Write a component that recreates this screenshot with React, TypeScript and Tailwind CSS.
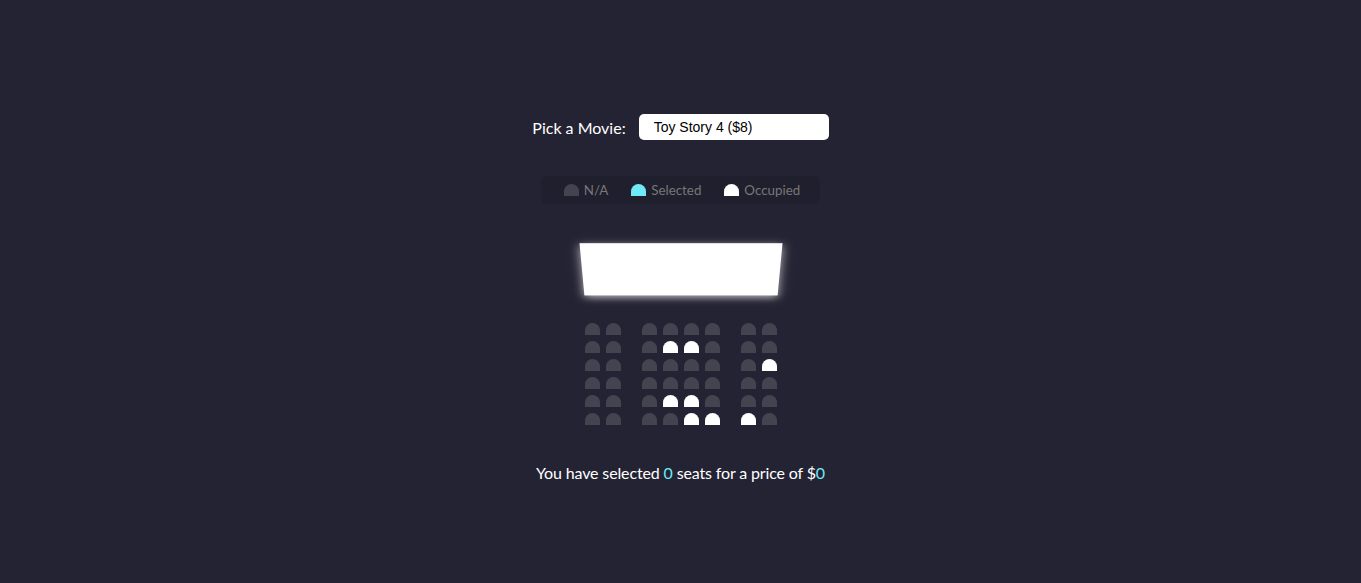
// Movie seat booking screen: movie picker, legend, screen and seat map.
const occupied: Record<number, number[]> = {
  1: [3, 4],
  2: [7],
  4: [3, 4],
  5: [4, 5, 6],
};

function Seat({ kind }: { kind: "na" | "selected" | "occupied" }) {
  const color =
    kind === "occupied" ? "bg-white" : kind === "selected" ? "bg-[#6feaf6]" : "bg-[#444451]";
  return <div className={`m-[3px] h-[12px] w-[15px] rounded-t-[10px] ${color}`} />;
}

export default function App() {
  return (
    <div className="flex min-h-[583px] flex-col items-center bg-[#242333] pt-[114px] font-['Lato',sans-serif] text-white">
      <div className="flex h-[26px] items-center">
        <label className="text-[16px] leading-[19px]">Pick a Movie:</label>
        <select
          defaultValue="10"
          className="ml-[13px] h-[26px] w-[190px] appearance-none rounded-[5px] border-0 bg-white px-[15px] py-[5px] font-['Liberation_Sans',Arial,sans-serif] text-[14px] leading-[16px] text-black outline-none"
        >
          <option value="10">Toy Story 4 ($8)</option>
          <option value="12">Avengers: Endgame ($10)</option>
          <option value="8">Joker ($12)</option>
        </select>
      </div>

      <ul className="mt-[36px] flex list-none justify-between rounded-[5px] bg-black/10 px-[10px] py-[5px] text-[#777]">
        <li className="mx-[10px] flex items-center">
          <Seat kind="na" />
          <small className="ml-[2px] text-[13.33px] leading-[16px]">N/A</small>
        </li>
        <li className="mx-[10px] flex items-center">
          <Seat kind="selected" />
          <small className="ml-[2px] text-[13.33px] leading-[16px]">Selected</small>
        </li>
        <li className="mx-[10px] flex items-center">
          <Seat kind="occupied" />
          <small className="ml-[2px] text-[13.33px] leading-[16px]">Occupied</small>
        </li>
      </ul>

      <div className="mt-[16px] [perspective:1000px]">
        <div className="my-[15px] h-[70px] w-full bg-white shadow-[0_3px_10px_rgba(255,255,255,0.7)] [transform:rotateX(-45deg)]" />
        {Array.from({ length: 6 }).map((_, r) => (
          <div key={r} className="flex">
            {Array.from({ length: 8 }).map((_, c) => (
              <div key={c} className={c === 1 ? "mr-[15px]" : c === 6 ? "ml-[15px]" : ""}>
                <Seat kind={occupied[r]?.includes(c) ? "occupied" : "na"} />
              </div>
            ))}
          </div>
        ))}
      </div>

      <p className="mt-[35px] text-[16px] leading-[19px] tracking-[-0.14px]">
        You have selected <span className="text-[#6feaf6]">0</span> seats for a price of $
        <span className="text-[#6feaf6]">0</span>
      </p>
    </div>
  );
}
